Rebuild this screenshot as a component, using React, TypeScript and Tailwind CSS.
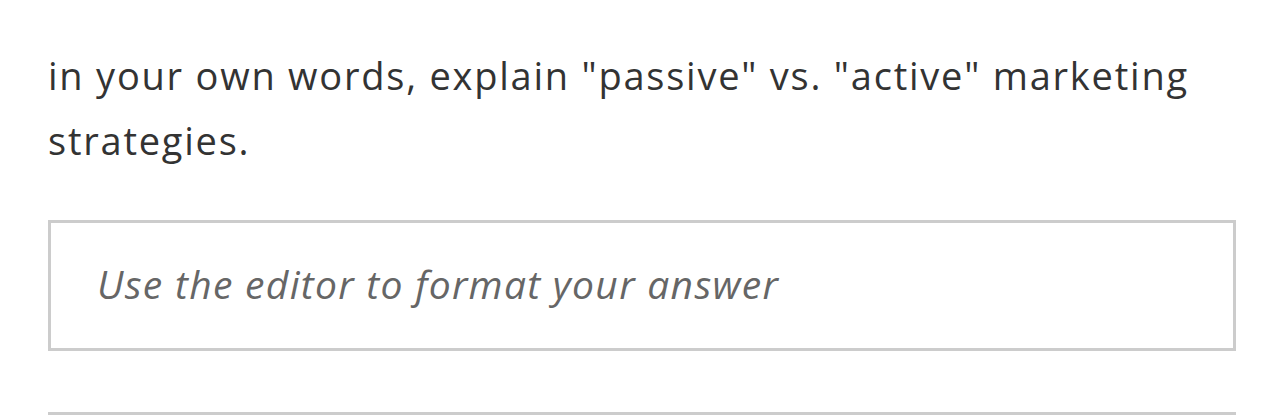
export default function App() {
  return (
    <div className="bg-white px-[48px] pt-[43px] w-[1284px] h-[419px] overflow-hidden" style={{ fontFamily: '"Open Sans", sans-serif' }}>
      <p className="text-[38px] leading-[65px] tracking-[1.77px] text-[#333333]">
        in your own words, explain "passive" vs. "active" marketing strategies.
      </p>
      {/* answer editor placeholder */}
      <div className="mt-[47px] w-[1188px] h-[131px] border-[3px] border-[#cccccc] flex items-center pl-[46px]">
        <span className="text-[39px] italic tracking-[1.3px] text-[#666666] -translate-y-[1px]">Use the editor to format your answer</span>
      </div>
      <div className="mt-[61px] w-[1188px] h-[3px] bg-[#cccccc]" />
    </div>
  )
}
